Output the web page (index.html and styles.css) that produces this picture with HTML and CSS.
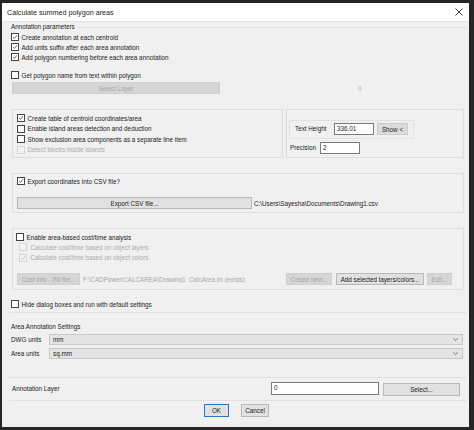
FILE: index.html
```html
<!DOCTYPE html>
<html>
<head>
<meta charset="utf-8">
<link rel="stylesheet" href="styles.css">
</head>
<body>
<div class="dialog">
  <div class="titlebar">
    <span class="title">Calculate summed polygon areas</span>
    <svg class="close" width="8" height="8" viewBox="0 0 8 8"><path d="M0.5 0.5 L7.5 7.5 M7.5 0.5 L0.5 7.5" stroke="#222" stroke-width="0.9" fill="none"/></svg>
  </div>
  <div class="content">
    <div class="grp-head"><span>Annotation parameters</span></div>
    <div class="rows1">
      <div class="row"><span class="cb on"><svg viewBox="0 0 7 7"><path d="M1.3 3.6 L2.9 5.2 L5.9 1.4"/></svg></span><span>Create annotation at each centroid</span></div>
      <div class="row"><span class="cb on"><svg viewBox="0 0 7 7"><path d="M1.3 3.6 L2.9 5.2 L5.9 1.4"/></svg></span><span>Add units suffix after each area annotation</span></div>
      <div class="row"><span class="cb on"><svg viewBox="0 0 7 7"><path d="M1.3 3.6 L2.9 5.2 L5.9 1.4"/></svg></span><span>Add polygon numbering before each area annotation</span></div>
    </div>
    <div class="row getname"><span class="cb"></span><span>Get polygon name from text within polygon</span></div>
    <div class="selrow">
      <span class="btn dis selbtn">Select Layer</span>
      <span class="zero">0</span>
    </div>

    <div class="grp2">
      <div class="box left2">
        <div class="row r2"><span class="cb on"><svg viewBox="0 0 7 7"><path d="M1.3 3.6 L2.9 5.2 L5.9 1.4"/></svg></span><span>Create table of centroid coordinates/area</span></div>
        <div class="row r2"><span class="cb"></span><span>Enable island areas detection and deduction</span></div>
        <div class="row r2"><span class="cb"></span><span>Show exclusion area components as a separate line item</span></div>
        <div class="row r2 disabled"><span class="cb dcb"></span><span>Detect blocks inside islands</span></div>
      </div>
      <div class="box right2">
        <div class="thbox">
          <span class="thlabel">Text Height</span>
          <span class="input thinput">336.01</span>
          <span class="btn showbtn">Show &lt;</span>
        </div>
        <div class="precrow">
          <span class="preclabel">Precision</span>
          <span class="input precinput">2</span>
        </div>
      </div>
    </div>

    <div class="box grp3">
      <div class="row"><span class="cb on"><svg viewBox="0 0 7 7"><path d="M1.3 3.6 L2.9 5.2 L5.9 1.4"/></svg></span><span>Export coordinates into CSV file?</span></div>
      <div class="csvrow">
        <span class="btn csvbtn">Export CSV file...</span>
        <span class="path">C:\Users\Sayesha\Documents\Drawing1.csv</span>
      </div>
    </div>

    <div class="box grp4">
      <div class="row"><span class="cb"></span><span>Enable area-based cost/time analysis</span></div>
      <div class="row r4 sub disabled"><span class="cb dcb"></span><span>Calculate cost/time based on object layers</span></div>
      <div class="row r4 sub disabled"><span class="cb dcb on"><svg viewBox="0 0 7 7"><path d="M1.3 3.6 L2.9 5.2 L5.9 1.4"/></svg></span><span>Calculate cost/time based on object colors</span></div>
      <div class="costrow">
        <span class="btn dis costbtn">Cost info - INI file...</span>
        <span class="path dpath">F:\CADPower\CALCAREA\Drawing1_CalcArea.ini (exists)</span>
        <span class="btn dis newbtn">Create new...</span>
        <span class="btn addbtn">Add selected layers/colors...</span>
        <span class="btn dis editbtn">Edit...</span>
      </div>
    </div>

    <div class="row hiderow"><span class="cb"></span><span>Hide dialog boxes and run with default settings</span></div>
    <div class="sep sep1"></div>
    <div class="aalabel">Area Annotation Settings</div>
    <div class="unitrow dwg">
      <span class="ulabel">DWG units</span>
      <span class="combo"><span>mm</span><svg width="5" height="3" viewBox="0 0 5 3"><path d="M0.3 0.3 L2.5 2.5 L4.7 0.3" stroke="#555" stroke-width="0.7" fill="none"/></svg></span>
    </div>
    <div class="unitrow area">
      <span class="ulabel">Area units</span>
      <span class="combo"><span>sq.mm</span><svg width="5" height="3" viewBox="0 0 5 3"><path d="M0.3 0.3 L2.5 2.5 L4.7 0.3" stroke="#555" stroke-width="0.7" fill="none"/></svg></span>
    </div>
    <div class="sep sep2"></div>
    <div class="layerrow">
      <span class="layerlabel">Annotation Layer</span>
      <span class="input layerinput">0</span>
      <span class="btn selectbtn">Select...</span>
    </div>
    <div class="sep sep3"></div>
    <div class="okrow">
      <span class="btn okbtn">OK</span>
      <span class="btn cancelbtn">Cancel</span>
    </div>
  </div>
</div>
</body>
</html>
```
FILE: styles.css
```css
html, body {
  margin: 0;
  padding: 0;
}
body {
  width: 474px;
  height: 430px;
  overflow: hidden;
  background: #262626;
  font-family: "Liberation Sans", Arial, sans-serif;
  font-size: 6.3px;
  color: #222;
}
.dialog {
  margin: 3px 0 0 2px;
  width: 467px;
  height: 424px;
  background: #f0f0f0;
  display: flex;
  flex-direction: column;
}
.titlebar {
  height: 18px;
  border-bottom: 1px solid #e3e3e3;
  background: #ffffff;
  display: flex;
  align-items: center;
  justify-content: space-between;
  padding: 0 6px 0 5px;
}
.title {
  font-size: 7.2px;
  color: #222;
}
.close {
  display: block;
}
.content {
  display: flex;
  flex-direction: column;
  padding-left: 7px;
}
.grp-head {
  height: 10px;
  line-height: 10px;
  display: flex;
  align-items: center;
  padding-left: 2px;
  width: 456px;
}
.grp-head::after {
  content: "";
  flex: 1;
  border-top: 1px solid #e0e0e0;
  margin-left: 3px;
}
.row {
  height: 10px;
  display: flex;
  align-items: center;
  white-space: nowrap;
}
.rows1 .row, .getname, .hiderow {
  padding-left: 2px;
}
.cb {
  width: 6px;
  height: 6px;
  border: 0.8px solid #444;
  background: #fff;
  margin-right: 2.5px;
  flex: none;
  display: flex;
}
.cb svg {
  width: 100%;
  height: 100%;
  fill: none;
  stroke: #333;
  stroke-width: 0.85;
}
.dcb {
  border-color: #d6d6d6;
  background: #f3f3f3;
}
.dcb svg {
  stroke: #b4b4b4;
}
.disabled {
  color: #ababab;
}
.getname {
  margin-top: 8px;
}
.selrow {
  margin-top: 2px;
  height: 12px;
  display: flex;
  align-items: center;
}
.btn {
  display: flex;
  align-items: center;
  justify-content: center;
  background: #e1e1e1;
  border: 1px solid #b8b8b8;
  box-sizing: border-box;
  white-space: nowrap;
  flex: none;
}
.btn.dis {
  background: #d6d6d6;
  border-color: #d0d0d0;
  color: #a8a8a8;
}
.selbtn {
  margin-left: 3px;
  width: 208px;
  height: 12px;
}
.zero {
  margin-left: 138px;
  color: #a8a8a8;
}
.box {
  border: 1px solid #dedede;
  box-sizing: border-box;
}
.grp2 {
  margin-top: 15px;
  margin-left: 3px;
  height: 49px;
  display: flex;
  gap: 3px;
}
.left2 {
  width: 271px;
  height: 49px;
  padding: 3px 0 0 4px;
}
.r2 {
  height: 10.5px;
}
.right2 {
  width: 178px;
  height: 49px;
  padding: 10px 0 0 2px;
}
.thbox {
  width: 125px;
  height: 19px;
  box-sizing: border-box;
  border: 1px solid #e2e2e2;
  padding: 2px 0 0 5px;
  display: flex;
}
.thlabel {
  width: 39px;
  line-height: 12px;
}
.input {
  background: #fff;
  border: 1px solid #7a7a7a;
  box-sizing: border-box;
  padding-left: 2px;
  line-height: 9px;
  display: block;
}
.thinput {
  width: 40px;
  height: 12px;
}
.showbtn {
  margin-left: 3px;
  width: 31px;
  height: 12px;
  background: #dcdcdc;
  border-color: #cccccc;
}
.precrow {
  margin-top: 3px;
  padding-left: 1px;
  display: flex;
  height: 12px;
}
.preclabel {
  width: 30px;
  line-height: 12px;
}
.precinput {
  width: 40px;
  height: 12px;
}
.grp3 {
  margin-top: 15px;
  margin-left: 3px;
  width: 452px;
  height: 40px;
  padding: 2px 0 0 4px;
}
.csvrow {
  margin-top: 11px;
  display: flex;
  align-items: center;
  height: 12px;
}
.csvbtn {
  width: 235px;
  height: 12px;
}
.path {
  margin-left: 2px;
  white-space: nowrap;
}
.grp4 {
  margin-top: 15px;
  margin-left: 3px;
  width: 452px;
  height: 62px;
  padding: 3px 0 0 3px;
}
.r4 {
  height: 10.5px;
}
.sub {
  padding-left: 3px;
}
.sub .cb {
  margin-right: 3.5px;
}
.costrow {
  margin-top: 10px;
  margin-left: 1px;
  display: flex;
  align-items: center;
  height: 12px;
}
.costbtn {
  width: 63px;
  height: 12px;
}
.dpath {
  margin-left: 3px;
  width: 203px;
  overflow: hidden;
  color: #a8a8a8;
}
.newbtn {
  width: 46px;
  height: 12px;
}
.addbtn {
  margin-left: 4px;
  width: 88px;
  height: 12px;
}
.editbtn {
  margin-left: 3px;
  width: 25px;
  height: 12px;
}
.hiderow {
  margin-top: 9px;
}
.sep {
  height: 1px;
  background: #e0e0e0;
  width: 457px;
}
.sep1 {
  margin-top: 3px;
}
.aalabel {
  margin-top: 9px;
  padding-left: 2px;
  height: 10px;
  line-height: 10px;
}
.unitrow {
  display: flex;
  align-items: center;
  height: 11px;
  padding-left: 2px;
}
.dwg {
  margin-top: 2px;
}
.area {
  margin-top: 3px;
}
.ulabel {
  width: 38px;
}
.combo {
  width: 414px;
  height: 11px;
  box-sizing: border-box;
  background: #e4e4e4;
  border: 1px solid #c8c8c8;
  display: flex;
  align-items: center;
  justify-content: space-between;
  padding: 0 4px 0 3px;
}
.sep2 {
  margin-top: 18px;
}
.layerrow {
  margin-top: 4px;
  height: 14px;
  display: flex;
  align-items: flex-start;
}
.layerlabel {
  margin-left: 3px;
  width: 259px;
  line-height: 14px;
}
.layerinput {
  width: 108px;
  height: 13px;
  line-height: 10px;
}
.selectbtn {
  margin-top: 1px;
  margin-left: 4px;
  width: 77px;
  height: 13px;
}
.sep3 {
  margin-top: 4px;
}
.okrow {
  margin-top: 3px;
  display: flex;
  height: 13px;
  padding-left: 195px;
  gap: 12px;
}
.okbtn {
  width: 25px;
  height: 13px;
  border: 1px solid #2a74c9;
}
.cancelbtn {
  width: 28px;
  height: 13px;
}
```
